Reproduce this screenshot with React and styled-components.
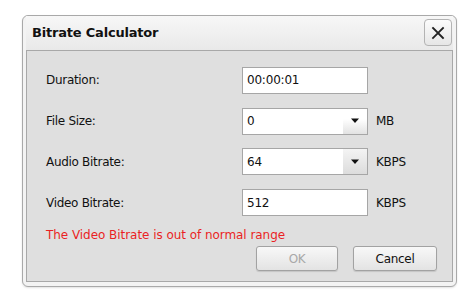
import React from 'react'
import styled, { createGlobalStyle } from 'styled-components'

const Global = createGlobalStyle`
  html, body {
    margin: 0;
    background: #fff;
  }
  body {
    font-family: 'DejaVu Sans', Verdana, sans-serif;
    font-size: 12px;
    color: #111;
  }
`

const Page = styled.div`
  width: 474px;
  height: 303px;
  padding: 15px 0 0 22px;
  box-sizing: border-box;
`

const Window = styled.div`
  width: 435px;
  height: 272px;
  box-sizing: border-box;
  border: 1px solid #a9a9a9;
  border-radius: 6px;
  background: #f3f3f3;
  box-shadow: 0 1px 2px rgba(0, 0, 0, 0.12);
  padding: 0 3px 4px 3px;
  display: flex;
  flex-direction: column;
`

const TitleBar = styled.div`
  height: 35px;
  display: flex;
  align-items: center;
  justify-content: space-between;
  padding: 0 1px 0 6px;
  background: linear-gradient(#f7f7f7, #e9e9e9);
`

const Title = styled.span`
  font-weight: 700;
  font-size: 13px;
  letter-spacing: -0.2px;
  color: #111;
`

const CloseButton = styled.button`
  width: 28px;
  height: 27px;
  padding: 0;
  border: 1px solid #b3b3b3;
  border-radius: 4px;
  background: linear-gradient(#fcfcfc, #e6e6e6);
  display: flex;
  align-items: center;
  justify-content: center;
`

const Panel = styled.div`
  flex: 1;
  border: 1px solid #a8a8a8;
  background: #dfdfdf;
  padding: 16px 14px 10px 19px;
  display: flex;
  flex-direction: column;
`

const Form = styled.div`
  display: grid;
  grid-template-columns: 196px 126px auto;
  grid-auto-rows: 27px;
  row-gap: 13.7px;
  align-items: center;
`

const Label = styled.span`
  font-size: 12px;
  letter-spacing: -0.3px;
`

const Unit = styled.span`
  padding-left: 8px;
  font-size: 12px;
  letter-spacing: -0.3px;
`

const Field = styled.div`
  height: 27px;
  box-sizing: border-box;
  border: 1px solid #a6a6a6;
  background: #fff;
  display: flex;
  align-items: center;
  font-size: 12px;
  letter-spacing: -0.2px;
`

const FieldText = styled.span`
  flex: 1;
  padding-left: 4px;
`

const DropButton = styled.span`
  width: 24px;
  align-self: stretch;
  display: flex;
  align-items: center;
  justify-content: center;
  background: ${p => (p.$filled ? 'linear-gradient(#f4f4f4, #dcdcdc)' : 'linear-gradient(#fff 40%, #e2e2e2)')};
`

const Error = styled.div`
  color: #ea1f24;
  font-size: 12px;
  letter-spacing: -0.05px;
  margin-top: 12px;
`

const Buttons = styled.div`
  display: flex;
  justify-content: flex-end;
  gap: 15px;
  margin-top: 4px;
  padding-right: 1px;
`

const Button = styled.button`
  width: ${p => p.$w}px;
  height: 25px;
  border: 1px solid #a2a2a2;
  border-radius: 3px;
  background: linear-gradient(#f8f8f8, #e3e3e3);
  font-family: inherit;
  font-size: 12px;
  letter-spacing: -0.3px;
  color: ${p => (p.disabled ? '#a8a8a8' : '#111')};
  box-shadow: 0 1px 1px rgba(0, 0, 0, 0.12);
`

const Arrow = () => (
  <svg width="10" height="6" viewBox="0 0 10 6">
    <path d="M1 0.5h8L5 5z" fill="#111" />
  </svg>
)

const Combo = ({ value, filled }) => (
  <Field>
    <FieldText>{value}</FieldText>
    <DropButton $filled={filled}>
      <Arrow />
    </DropButton>
  </Field>
)

export default function App() {
  return (
    <>
      <Global />
      <Page>
        <Window>
          <TitleBar>
            <Title>Bitrate Calculator</Title>
            <CloseButton aria-label="Close">
              <svg width="14" height="14" viewBox="0 0 14 14">
                <path d="M2 2l10 10M12 2L2 12" stroke="#222" strokeWidth="1.8" strokeLinecap="square" />
              </svg>
            </CloseButton>
          </TitleBar>
          <Panel>
            <Form>
              <Label>Duration:</Label>
              <Field><FieldText>00:00:01</FieldText></Field>
              <span />

              <Label>File Size:</Label>
              <Combo value="0" />
              <Unit>MB</Unit>

              <Label>Audio Bitrate:</Label>
              <Combo value="64" filled />
              <Unit>KBPS</Unit>

              <Label>Video Bitrate:</Label>
              <Field><FieldText>512</FieldText></Field>
              <Unit>KBPS</Unit>
            </Form>
            <Error>The Video Bitrate is out of normal range</Error>
            <Buttons>
              <Button $w={82} disabled>OK</Button>
              <Button $w={84}>Cancel</Button>
            </Buttons>
          </Panel>
        </Window>
      </Page>
    </>
  )
}
